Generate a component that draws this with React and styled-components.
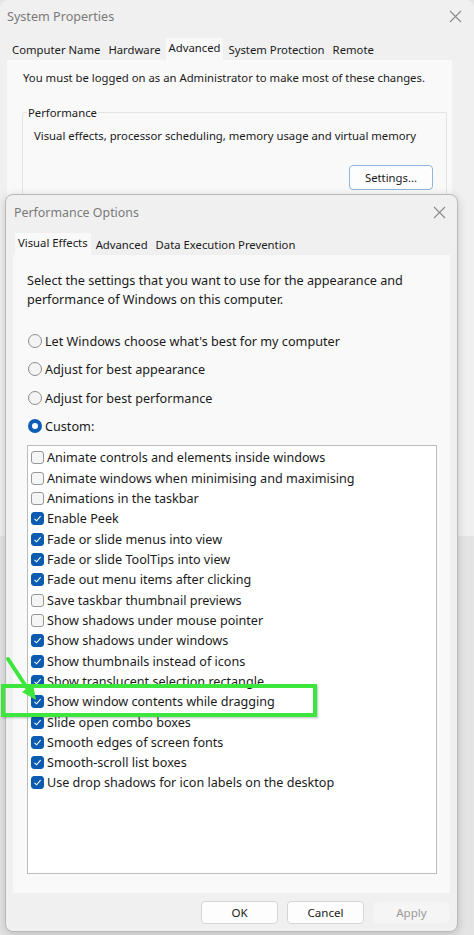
import React from 'react';
import styled, { createGlobalStyle } from 'styled-components';

const GlobalStyle = createGlobalStyle`
  html, body {
    margin: 0;
    padding: 0;
    background: #dedede;
  }
  body {
    font-family: "Noto Sans", "Open Sans", sans-serif;
    color: #1a1a1a;
  }
`;

const Desktop = styled.div`
  position: relative;
  width: 474px;
  height: 935px;
  overflow: hidden;
  background: #e4e4e4;
`;

const BackWindow = styled.div`
  position: absolute;
  left: 0;
  top: 0;
  width: 474px;
  height: 536px;
  background: #f0f0f0;
  border-radius: 8px 8px 0 0;
  display: flex;
  flex-direction: column;
`;

const FrontWindow = styled.div`
  position: absolute;
  left: 5px;
  top: 194px;
  width: 451px;
  height: 736px;
  background: #f0f0f0;
  border: 1px solid #b9b9b9;
  border-radius: 8px;
  box-shadow: 0 2px 10px rgba(0, 0, 0, 0.18);
  display: flex;
  flex-direction: column;
`;

const TitleBar = styled.div`
  height: ${(p) => p.h}px;
  flex: none;
  display: flex;
  align-items: center;
  justify-content: space-between;
  padding: 0 ${(p) => p.pr}px 0 ${(p) => p.pl}px;
  font-size: ${(p) => p.fs}px;
  color: #7a7a7a;
`;

const CloseIcon = () => (
  <svg width="13" height="13" viewBox="0 0 13 13">
    <path d="M1 1 L12 12 M12 1 L1 12" stroke="#8a8a8a" strokeWidth="1.1" />
  </svg>
);

const TabStrip = styled.div`
  display: flex;
  align-items: flex-end;
  padding-left: ${(p) => p.pl}px;
  height: ${(p) => p.h}px;
  flex: none;
`;

const Tab = styled.div`
  font-size: 11.3px;
  padding: 0 3px;
  height: ${(p) => (p.selected ? 22 : 20)}px;
  line-height: 20px;
  background: ${(p) => (p.selected ? '#f9f9f9' : 'transparent')};
  color: #1a1a1a;
  margin-right: 2px;
  white-space: nowrap;
`;

const Panel = styled.div`
  background: #f9f9f9;
  margin: 0 ${(p) => p.mr}px 0 ${(p) => p.ml}px;
  flex: 1;
  display: flex;
  flex-direction: column;
`;

const BackText = styled.div`
  font-size: 11.3px;
  padding: 10px 0 0 16px;
  white-space: nowrap;
`;

const GroupBox = styled.fieldset`
  margin: 20px 5px 0 15px;
  border: 1px solid #e3e3e3;
  padding: 8px 11px 0 11px;
  height: 90px;
  display: flex;
  flex-direction: column;
  border-radius: 2px;
  legend {
    font-size: 11.3px;
    padding: 0 1px;
    margin-left: -7px;
  }
`;

const GroupText = styled.div`
  font-size: 11.3px;
  white-space: nowrap;
`;

const SettingsButton = styled.div`
  align-self: flex-end;
  margin-top: 22px;
  margin-right: 2px;
  width: 84px;
  height: 25px;
  box-sizing: border-box;
  border: 1px solid #8fb6dc;
  border-radius: 4px;
  background: #fdfdfd;
  font-size: 11.3px;
  display: flex;
  align-items: center;
  justify-content: center;
`;

const Intro = styled.p`
  margin: 16px 0 0 14px;
  font-size: 12.65px;
  line-height: 19px;
`;

const RadioGroup = styled.div`
  display: flex;
  flex-direction: column;
  gap: 9.6px;
  margin: 22px 0 0 15px;
`;

const RadioRow = styled.div`
  display: flex;
  align-items: center;
  height: 19px;
  font-size: 12.65px;
  gap: 3px;
`;

const RadioDot = styled.span`
  width: 14px;
  height: 14px;
  box-sizing: border-box;
  border-radius: 50%;
  border: ${(p) => (p.checked ? '4px solid #0d5db5' : '1px solid #8c8c8c')};
  background: ${(p) => (p.checked ? '#fff' : '#f4f4f4')};
`;

const ListBox = styled.div`
  margin: 9px 13px 0 14px;
  height: 429px;
  background: #fff;
  border: 1px solid #bdbdbd;
  padding: 2px 0 0 3px;
  box-sizing: border-box;
  display: flex;
  flex-direction: column;
`;

const Item = styled.div`
  display: flex;
  align-items: center;
  height: 20.32px;
  font-size: 12.6px;
  gap: 3px;
  white-space: nowrap;
`;

const Box = styled.span`
  width: 13px;
  height: 13px;
  box-sizing: border-box;
  border-radius: 3px;
  flex: none;
  display: flex;
  align-items: center;
  justify-content: center;
  background: ${(p) => (p.checked ? '#0b5cb0' : '#f5f5f5')};
  border: 1px solid ${(p) => (p.checked ? '#0b5cb0' : '#979797')};
`;

const Footer = styled.div`
  height: 38px;
  flex: none;
  display: flex;
  justify-content: flex-end;
  align-items: center;
  gap: 9px;
  padding-right: 7px;
`;

const Button = styled.div`
  width: 77px;
  height: 23px;
  box-sizing: border-box;
  border-radius: 4px;
  border: 1px solid ${(p) => (p.disabled ? '#f2f2f2' : '#d5d5d5')};
  background: ${(p) => (p.disabled ? '#f5f5f5' : '#fdfdfd')};
  color: ${(p) => (p.disabled ? '#9a9a9a' : '#1a1a1a')};
  font-size: 11.6px;
  display: flex;
  align-items: center;
  justify-content: center;
`;

const Highlight = styled.div`
  position: absolute;
  left: 1px;
  top: 684px;
  width: 316px;
  height: 33px;
  box-sizing: border-box;
  border: 4px solid #3de63d;
  box-shadow: 1px 1px 2px rgba(0, 0, 0, 0.25);
`;

const ArrowLayer = styled.svg`
  position: absolute;
  left: 0;
  top: 650px;
`;

const Check = () => (
  <svg width="9" height="9" viewBox="0 0 9 9">
    <path d="M1.5 4.8 L3.6 6.8 L7.6 2.2" fill="none" stroke="#fff" strokeWidth="1.1" />
  </svg>
);

const items = [
  ['Animate controls and elements inside windows', false],
  ['Animate windows when minimising and maximising', false],
  ['Animations in the taskbar', false],
  ['Enable Peek', true],
  ['Fade or slide menus into view', true],
  ['Fade or slide ToolTips into view', true],
  ['Fade out menu items after clicking', true],
  ['Save taskbar thumbnail previews', false],
  ['Show shadows under mouse pointer', false],
  ['Show shadows under windows', true],
  ['Show thumbnails instead of icons', true],
  ['Show translucent selection rectangle', true],
  ['Show window contents while dragging', true],
  ['Slide open combo boxes', true],
  ['Smooth edges of screen fonts', true],
  ['Smooth-scroll list boxes', true],
  ['Use drop shadows for icon labels on the desktop', true],
];

const radios = [
  ["Let Windows choose what's best for my computer", false],
  ['Adjust for best appearance', false],
  ['Adjust for best performance', false],
  ['Custom:', true],
];

export default function App() {
  return (
    <Desktop>
      <GlobalStyle />
      <BackWindow>
        <TitleBar h={32} pl={7} pr={12} fs={12.6}>
          <span>System Properties</span>
          <CloseIcon />
        </TitleBar>
        <TabStrip pl={9} h={28}>
          <Tab>Computer Name</Tab>
          <Tab>Hardware</Tab>
          <Tab selected>Advanced</Tab>
          <Tab>System Protection</Tab>
          <Tab>Remote</Tab>
        </TabStrip>
        <Panel ml={7} mr={22}>
          <BackText>You must be logged on as an Administrator to make most of these changes.</BackText>
          <GroupBox>
            <legend>Performance</legend>
            <GroupText>Visual effects, processor scheduling, memory usage and virtual memory</GroupText>
            <SettingsButton>Settings...</SettingsButton>
          </GroupBox>
        </Panel>
        <div style={{ height: 22 }} />
      </BackWindow>

      <FrontWindow>
        <TitleBar h={34} pl={8} pr={11} fs={12.4}>
          <span>Performance Options</span>
          <CloseIcon />
        </TitleBar>
        <TabStrip pl={9} h={26}>
          <Tab selected>Visual Effects</Tab>
          <Tab>Advanced</Tab>
          <Tab>Data Execution Prevention</Tab>
        </TabStrip>
        <Panel ml={7} mr={7}>
          <Intro>
            Select the settings that you want to use for the appearance and
            <br />
            performance of Windows on this computer.
          </Intro>
          <RadioGroup>
            {radios.map(([label, checked]) => (
              <RadioRow key={label}>
                <RadioDot checked={checked} />
                {label}
              </RadioRow>
            ))}
          </RadioGroup>
          <ListBox>
            {items.map(([label, checked]) => (
              <Item key={label}>
                <Box checked={checked}>{checked && <Check />}</Box>
                {label}
              </Item>
            ))}
          </ListBox>
        </Panel>
        <Footer>
          <Button>OK</Button>
          <Button>Cancel</Button>
          <Button disabled>Apply</Button>
        </Footer>
      </FrontWindow>

      <Highlight />
      <ArrowLayer width="50" height="60" viewBox="0 0 50 60">
        <path d="M8 9 L29 41" stroke="#3de63d" strokeWidth="4" strokeLinecap="round" />
        <path d="M36 50 L22 42 L33 34 Z" fill="#3de63d" />
      </ArrowLayer>
    </Desktop>
  );
}
